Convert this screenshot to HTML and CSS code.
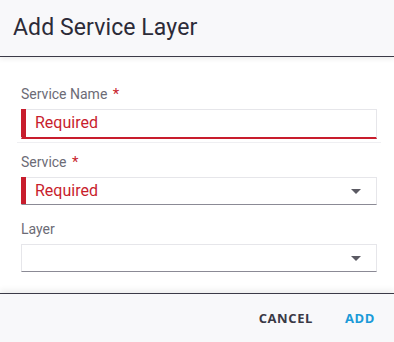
FILE: index.html
```html
<!DOCTYPE html>
<html>
<head>
<meta charset="utf-8">
<link rel="stylesheet" href="styles.css">
</head>
<body>
<div class="dialog">
  <header class="dlg-header">
    <h1 class="dlg-title">Add Service Layer</h1>
  </header>
  <main class="dlg-body">
    <div class="field field-first">
      <label class="field-label">Service Name <span class="req">*</span></label>
      <div class="ring">
        <div class="input input-text input-error">
          <span class="bar"></span>
          <span class="value">Required</span>
        </div>
      </div>
    </div>
    <div class="field">
      <label class="field-label">Service <span class="req">*</span></label>
      <div class="input input-select">
        <span class="bar"></span>
        <span class="value">Required</span>
        <span class="caret"></span>
      </div>
    </div>
    <div class="field">
      <label class="field-label">Layer</label>
      <div class="input input-select">
        <span class="value"></span>
        <span class="caret"></span>
      </div>
    </div>
  </main>
  <footer class="dlg-footer">
    <button class="btn btn-cancel">CANCEL</button>
    <button class="btn btn-add">ADD</button>
  </footer>
</div>
</body>
</html>
```
FILE: styles.css
```css
html, body {
  margin: 0;
  padding: 0;
  background: #ffffff;
}
body {
  width: 394px;
  height: 342px;
  overflow: hidden;
  font-family: Roboto, "Liberation Sans", sans-serif;
}
.dialog {
  width: 394px;
  height: 342px;
  display: flex;
  flex-direction: column;
  background: #ffffff;
}
.dlg-header {
  height: 56px;
  flex: none;
  background: #f8f8fa;
  border-bottom: 1px solid #3b3a47;
  box-shadow: 0 2px 5px rgba(0, 0, 0, 0.08);
  display: flex;
  align-items: center;
  padding-left: 13px;
  position: relative;
  z-index: 1;
}
.dlg-title {
  margin: 0;
  font-size: 23px;
  font-weight: 400;
  color: #2c2b38;
  letter-spacing: 0.1px;
  padding-bottom: 2px;
}
.dlg-body {
  flex: 1;
  padding: 27px 17px 0 21px;
}
.field {
  display: flex;
  flex-direction: column;
  margin-bottom: 14px;
}
.field-first {
  margin-bottom: 9px;
}
.field-label {
  font-size: 14px;
  line-height: 20px;
  color: #6c6b76;
  margin-bottom: 5px;
}
.req {
  color: #c81d2d;
  font-size: 15px;
  margin-left: 2px;
}
.ring {
  margin: 0 -4px;
  padding: 0 4px 3px;
  border-bottom: 1px solid #efeff2;
}
.input {
  box-sizing: border-box;
  display: flex;
  align-items: center;
  height: 28px;
  border: 1px solid #e6e6ea;
  border-bottom: 1px solid #8b8a95;
  background: #ffffff;
}
.input-text {
  height: 30px;
}
.input-error {
  border-bottom: 2px solid #c81d2d;
}
.bar {
  align-self: stretch;
  width: 5px;
  margin: -1px 0 0 -1px;
  background: #c81d2d;
  flex: none;
}
.value {
  flex: 1;
  padding-left: 9px;
  font-size: 16px;
  color: #c81d2d;
  padding-bottom: 2px;
}
.input-select .value {
  padding-bottom: 1px;
}
.caret {
  width: 0;
  height: 0;
  border-left: 5px solid transparent;
  border-right: 5px solid transparent;
  border-top: 5px solid #5b5a63;
  margin-right: 15px;
  margin-top: 1px;
}
.dlg-footer {
  height: 48px;
  flex: none;
  background: #f8f8fa;
  border-top: 1px solid #3b3a47;
  box-shadow: 0 -3px 6px rgba(0, 0, 0, 0.07);
  display: flex;
  justify-content: flex-end;
  align-items: center;
  padding-right: 19px;
  gap: 32px;
}
.btn {
  border: none;
  background: none;
  padding: 0;
  font-family: "Open Sans", "Liberation Sans", sans-serif;
  font-weight: 700;
  font-size: 13px;
  letter-spacing: 0.6px;
  cursor: pointer;
}
.btn-cancel {
  color: #3a3945;
}
.btn-add {
  color: #1b9ad8;
}
```
